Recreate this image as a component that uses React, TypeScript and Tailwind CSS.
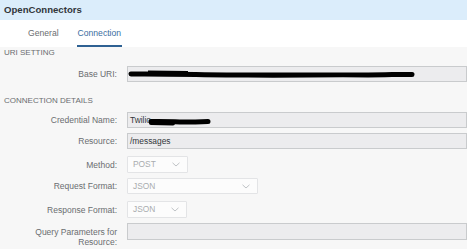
import React from "react";

const font = { fontFamily: '"Liberation Sans", Arial, sans-serif' };

function Chevron() {
  return (
    <svg width="8" height="5" viewBox="0 0 8 5" className="shrink-0">
      <path d="M0.5 0.8 L4 4 L7.5 0.8" fill="none" stroke="#b8bcc0" strokeWidth="0.9" />
    </svg>
  );
}

function Label({ children }: { children: React.ReactNode }) {
  return (
    <div className="w-[117px] shrink-0 text-right text-[8.5px] leading-[10px] text-[#6a6d70]">
      {children}
    </div>
  );
}

function TextInput({ children }: { children?: React.ReactNode }) {
  return (
    <div className="relative ml-[10px] flex h-full flex-1 items-center border border-[#c9cbcd] bg-[#ececee] pl-[2px] text-[8.4px] text-[#32363a]">
      {children}
    </div>
  );
}

function Select({ value, width }: { value: string; width: string }) {
  return (
    <div
      className={`ml-[10px] flex h-full items-center justify-between rounded-[1px] border border-[#e3e4e6] bg-[#fcfcfc] pl-[5px] pr-[7px] text-[8.4px] text-[#a9acaf] ${width}`}
    >
      <span>{value}</span>
      <Chevron />
    </div>
  );
}

export default function App() {
  return (
    <div className="h-[249px] w-[474px] overflow-hidden bg-white" style={font}>
      <div className="w-[467px]">
        <div className="flex h-[20px] items-center bg-[#dbedfb] pl-[4px]">
          <span className="text-[9.6px] font-bold text-[#32363a]">OpenConnectors</span>
        </div>
        <div className="flex h-[27px] items-stretch bg-white">
          <div className="ml-[28px] flex items-center text-[8.6px] text-[#6a6d70]">General</div>
          <div className="ml-[18px] flex items-center border-b-2 border-[#2e6193] px-[1px] pt-[2px] text-[8.6px] text-[#3a6da0]">
            Connection
          </div>
        </div>
        <div className="h-[202px] bg-[#f7f7f7]">
          <div className="h-[12px] pl-[4px] text-[8px] leading-[12px] text-[#6a6d70]">URI SETTING</div>
          <div className="mt-[7px] flex h-[16px] items-center">
            <Label>Base URI:</Label>
            <TextInput>
              <svg className="absolute left-0 top-0" width="300" height="16" viewBox="0 0 300 16">
                <path
                  d="M3 7 C40 6.5 80 8 120 8 C160 8.5 200 7.5 240 8 C260 8 275 7 284 7.5"
                  fill="none"
                  stroke="#000"
                  strokeWidth="5"
                  strokeLinecap="round"
                />
                <path d="M20 5 L60 5.5" stroke="#000" strokeWidth="3" />
              </svg>
            </TextInput>
          </div>
          <div className="mt-[13px] h-[12px] pl-[4px] text-[8px] leading-[12px] text-[#6a6d70]">
            CONNECTION DETAILS
          </div>
          <div className="mt-[5px] flex h-[16px] items-center">
            <Label>Credential Name:</Label>
            <TextInput>
              <span>Twilio</span>
              <svg className="absolute left-0 top-0" width="90" height="16" viewBox="0 0 90 16">
                <path
                  d="M23 8.5 C35 8 50 9 62 9 C70 9 76 8.5 80 8.5"
                  fill="none"
                  stroke="#000"
                  strokeWidth="5"
                  strokeLinecap="round"
                />
                <path d="M23 10 L45 10.5" stroke="#000" strokeWidth="4" strokeLinecap="round" />
              </svg>
            </TextInput>
          </div>
          <div className="mt-[5px] flex h-[16px] items-center">
            <Label>Resource:</Label>
            <TextInput>
              <span>/messages</span>
            </TextInput>
          </div>
          <div className="mt-[7px] flex h-[17px] items-center">
            <Label>Method:</Label>
            <Select value="POST" width="w-[61px]" />
          </div>
          <div className="mt-[5px] flex h-[16px] items-center">
            <Label>Request Format:</Label>
            <Select value="JSON" width="w-[131px]" />
          </div>
          <div className="mt-[7px] flex h-[17px] items-center">
            <Label>Response Format:</Label>
            <Select value="JSON" width="w-[60px]" />
          </div>
          <div className="mt-[5px] flex h-[17px] items-start">
            <div className="w-[117px] shrink-0 pt-[4px] text-right text-[8.5px] leading-[10px] text-[#6a6d70]">
              Query Parameters for
              <br />
              Resource:
            </div>
            <TextInput />
          </div>
        </div>
      </div>
    </div>
  );
}
